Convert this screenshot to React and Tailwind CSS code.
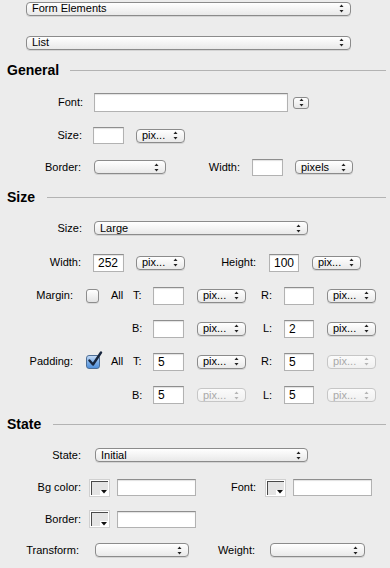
import clsx from 'clsx'

function Arrows({ faded }) {
  return (
    <svg width="5" height="9" viewBox="0 0 5 9" className="shrink-0">
      <path d="M2.5 0.5 L4.5 3 L0.5 3 Z" fill={faded ? '#b4b4b4' : '#222'} />
      <path d="M0.5 6 L4.5 6 L2.5 8.5 Z" fill={faded ? '#b4b4b4' : '#222'} />
    </svg>
  )
}

function Select({ className, label = '', disabled = false }) {
  return (
    <div
      className={clsx(
        'flex h-[14px] shrink-0 items-center justify-between rounded-[4px] border bg-linear-to-b pl-[5px] pr-[6px] text-[11px] leading-none',
        disabled
          ? 'border-[#c6c6c6] from-[#fbfbfb] to-[#f0f0f0] text-[#a9a9a9]'
          : 'border-[#8b8b8b] from-white to-[#e9e9e9] text-black shadow-[0_1px_0_rgba(0,0,0,0.1)]',
        className
      )}
    >
      <span>{label}</span>
      <Arrows faded={disabled} />
    </div>
  )
}

function Field({ className, value = '' }) {
  return (
    <div
      className={clsx(
        'flex shrink-0 items-center border border-[#b2b2b2] border-t-[#8e8e8e] bg-white pl-[4px] text-[12px] leading-none text-black shadow-[inset_0_1px_1px_rgba(0,0,0,0.12)]',
        className
      )}
    >
      {value}
    </div>
  )
}

function Label({ className, children }) {
  return <span className={clsx('shrink-0 text-[11px] leading-none text-black', className)}>{children}</span>
}

function Checkbox({ checked }) {
  if (!checked) {
    return (
      <div className="ml-[13px] h-[14px] w-[13px] shrink-0 rounded-[3px] border border-[#8d8d8d] bg-linear-to-b from-white to-[#e4e4e4] shadow-[0_1px_0_rgba(0,0,0,0.08)]" />
    )
  }
  return (
    <div className="relative ml-[13px] h-[14px] w-[14px] shrink-0 rounded-[3px] border border-[#4e6f97] bg-linear-to-b from-[#c4dbf6] via-[#7fb0e8] to-[#4f8fda]">
      <svg width="16" height="17" viewBox="0 0 16 17" className="absolute -top-[5px] left-[0px]">
        <path d="M2.5 9.5 L6 13.5 L14 1.5" fill="none" stroke="#18263d" strokeWidth="2.4" strokeLinecap="round" strokeLinejoin="round" />
      </svg>
    </div>
  )
}

function Colorwell({ className }) {
  return (
    <div className={clsx('relative h-[18px] w-[21px] shrink-0 border border-[#d0d0d0] bg-white p-[1px]', className)}>
      <div className="h-full w-full border-l border-t border-[#4a4a4a] border-b-[#c8c8c8] border-r-[#c8c8c8] bg-[#e4e4e4]" />
      <div className="absolute bottom-[1px] right-[1px] flex h-[5px] w-[8px] items-center justify-center bg-white">
        <svg width="6" height="4" viewBox="0 0 6 4">
          <path d="M0 0 L6 0 L3 3.5 Z" fill="#111" />
        </svg>
      </div>
    </div>
  )
}

function Heading({ children, gap }) {
  return (
    <div className="flex h-[20px] items-center pl-[7px] pr-[4px]">
      <span className="shrink-0 text-[14px] font-bold leading-none text-black">{children}</span>
      <div className={clsx('h-px flex-1 bg-[#b3b3b3]', gap)} />
    </div>
  )
}

export default function App() {
  return (
    <div className="h-[568px] w-[390px] overflow-hidden bg-[#ececec] font-['Liberation_Sans',Arial,sans-serif]">
      <div className="flex h-[17px] items-center pl-[26px]">
        <Select className="w-[325px]" label="Form Elements" />
      </div>
      <div className="mt-[16px] flex h-[19px] items-center pl-[26px]">
        <Select className="w-[325px]" label="List" />
      </div>

      <div className="mt-[8px]">
        <Heading gap="ml-[11px]">General</Heading>
      </div>

      <div className="mt-[12px] flex h-[21px] items-center">
        <Label className="w-[83px] text-right">Font:</Label>
        <Field className="ml-[11px] h-[19px] w-[194px]" />
        <div className="ml-[5px] flex h-[12px] w-[16px] items-center justify-center rounded-[3px] border border-[#8b8b8b] bg-linear-to-b from-white to-[#e6e6e6]">
          <Arrows />
        </div>
      </div>

      <div className="mt-[12px] flex h-[21px] items-center">
        <Label className="w-[82px] text-right">Size:</Label>
        <Field className="ml-[11px] h-[17px] w-[31px]" />
        <Select className="ml-[12px] w-[49px]" label="pix..." />
      </div>

      <div className="mt-[11px] flex h-[20px] items-center">
        <Label className="w-[81px] text-right">Border:</Label>
        <Select className="ml-[13px] w-[72px]" />
        <Label className="w-[74px] text-right">Width:</Label>
        <Field className="ml-[12px] h-[17px] w-[31px]" />
        <Select className="ml-[12px] w-[58px]" label="pixels" />
      </div>

      <div className="mt-[10px]">
        <Heading gap="ml-[12px]">Size</Heading>
      </div>

      <div className="mt-[11px] flex h-[20px] items-center">
        <Label className="w-[82px] text-right">Size:</Label>
        <Select className="ml-[12px] w-[214px]" label="Large" />
      </div>

      <div className="mt-[14px] flex h-[21px] items-center">
        <Label className="w-[81px] text-right">Width:</Label>
        <Field className="ml-[12px] h-[18px] w-[31px]" value="252" />
        <Select className="ml-[12px] w-[49px]" label="pix..." />
        <Label className="w-[71px] text-right">Height:</Label>
        <Field className="ml-[13px] h-[18px] w-[30px]" value="100" />
        <Select className="ml-[13px] w-[49px]" label="pix..." />
      </div>

      <div className="mt-[12px] flex h-[21px] items-center">
        <Label className="w-[73px] text-right">Margin:</Label>
        <Checkbox />
        <Label className="ml-[12px] w-[22px]">All</Label>
        <Label className="w-[20px]">T:</Label>
        <Field className="h-[18px] w-[31px]" />
        <Select className="ml-[13px] w-[49px]" label="pix..." />
        <Label className="ml-[15px] w-[23px]">R:</Label>
        <Field className="h-[18px] w-[30px]" />
        <Select className="ml-[13px] w-[49px]" label="pix..." />
      </div>

      <div className="mt-[12px] flex h-[21px] items-center">
        <Label className="ml-[132px] w-[21px]">B:</Label>
        <Field className="h-[18px] w-[31px]" />
        <Select className="ml-[13px] w-[49px]" label="pix..." />
        <Label className="ml-[17px] w-[21px]">L:</Label>
        <Field className="h-[18px] w-[30px]" value="2" />
        <Select className="ml-[13px] w-[49px]" label="pix..." />
      </div>

      <div className="mt-[12px] flex h-[21px] items-center">
        <Label className="w-[73px] text-right">Padding:</Label>
        <Checkbox checked />
        <Label className="ml-[11px] w-[22px]">All</Label>
        <Label className="w-[20px]">T:</Label>
        <Field className="h-[18px] w-[31px]" value="5" />
        <Select className="ml-[13px] w-[49px]" label="pix..." />
        <Label className="ml-[15px] w-[23px]">R:</Label>
        <Field className="h-[18px] w-[30px]" value="5" />
        <Select className="ml-[13px] w-[49px]" label="pix..." disabled />
      </div>

      <div className="mt-[13px] flex h-[20px] items-center">
        <Label className="ml-[132px] w-[21px]">B:</Label>
        <Field className="h-[18px] w-[31px]" value="5" />
        <Select className="ml-[13px] w-[49px]" label="pix..." disabled />
        <Label className="ml-[17px] w-[21px]">L:</Label>
        <Field className="h-[18px] w-[30px]" value="5" />
        <Select className="ml-[13px] w-[49px]" label="pix..." disabled />
      </div>

      <div className="mt-[9px]">
        <Heading gap="ml-[12px]">State</Heading>
      </div>

      <div className="mt-[11px] flex h-[20px] items-center">
        <Label className="w-[81px] text-right">State:</Label>
        <Select className="ml-[14px] w-[213px]" label="Initial" />
      </div>

      <div className="mt-[12px] flex h-[21px] items-center">
        <Label className="w-[81px] text-right">Bg color:</Label>
        <Colorwell className="ml-[8px]" />
        <Field className="ml-[7px] h-[17px] w-[79px]" />
        <Label className="w-[60px] text-right">Font:</Label>
        <Colorwell className="ml-[9px]" />
        <Field className="ml-[7px] h-[17px] w-[79px]" />
      </div>

      <div className="mt-[11px] flex h-[20px] items-center">
        <Label className="w-[81px] text-right">Border:</Label>
        <Colorwell className="ml-[8px]" />
        <Field className="ml-[7px] h-[17px] w-[79px]" />
      </div>

      <div className="mt-[11px] flex h-[20px] items-center">
        <Label className="w-[79px] text-right">Transform:</Label>
        <Select className="ml-[16px] w-[94px]" />
        <Label className="w-[66px] text-right">Weight:</Label>
        <Select className="ml-[15px] w-[95px]" />
      </div>
    </div>
  )
}
